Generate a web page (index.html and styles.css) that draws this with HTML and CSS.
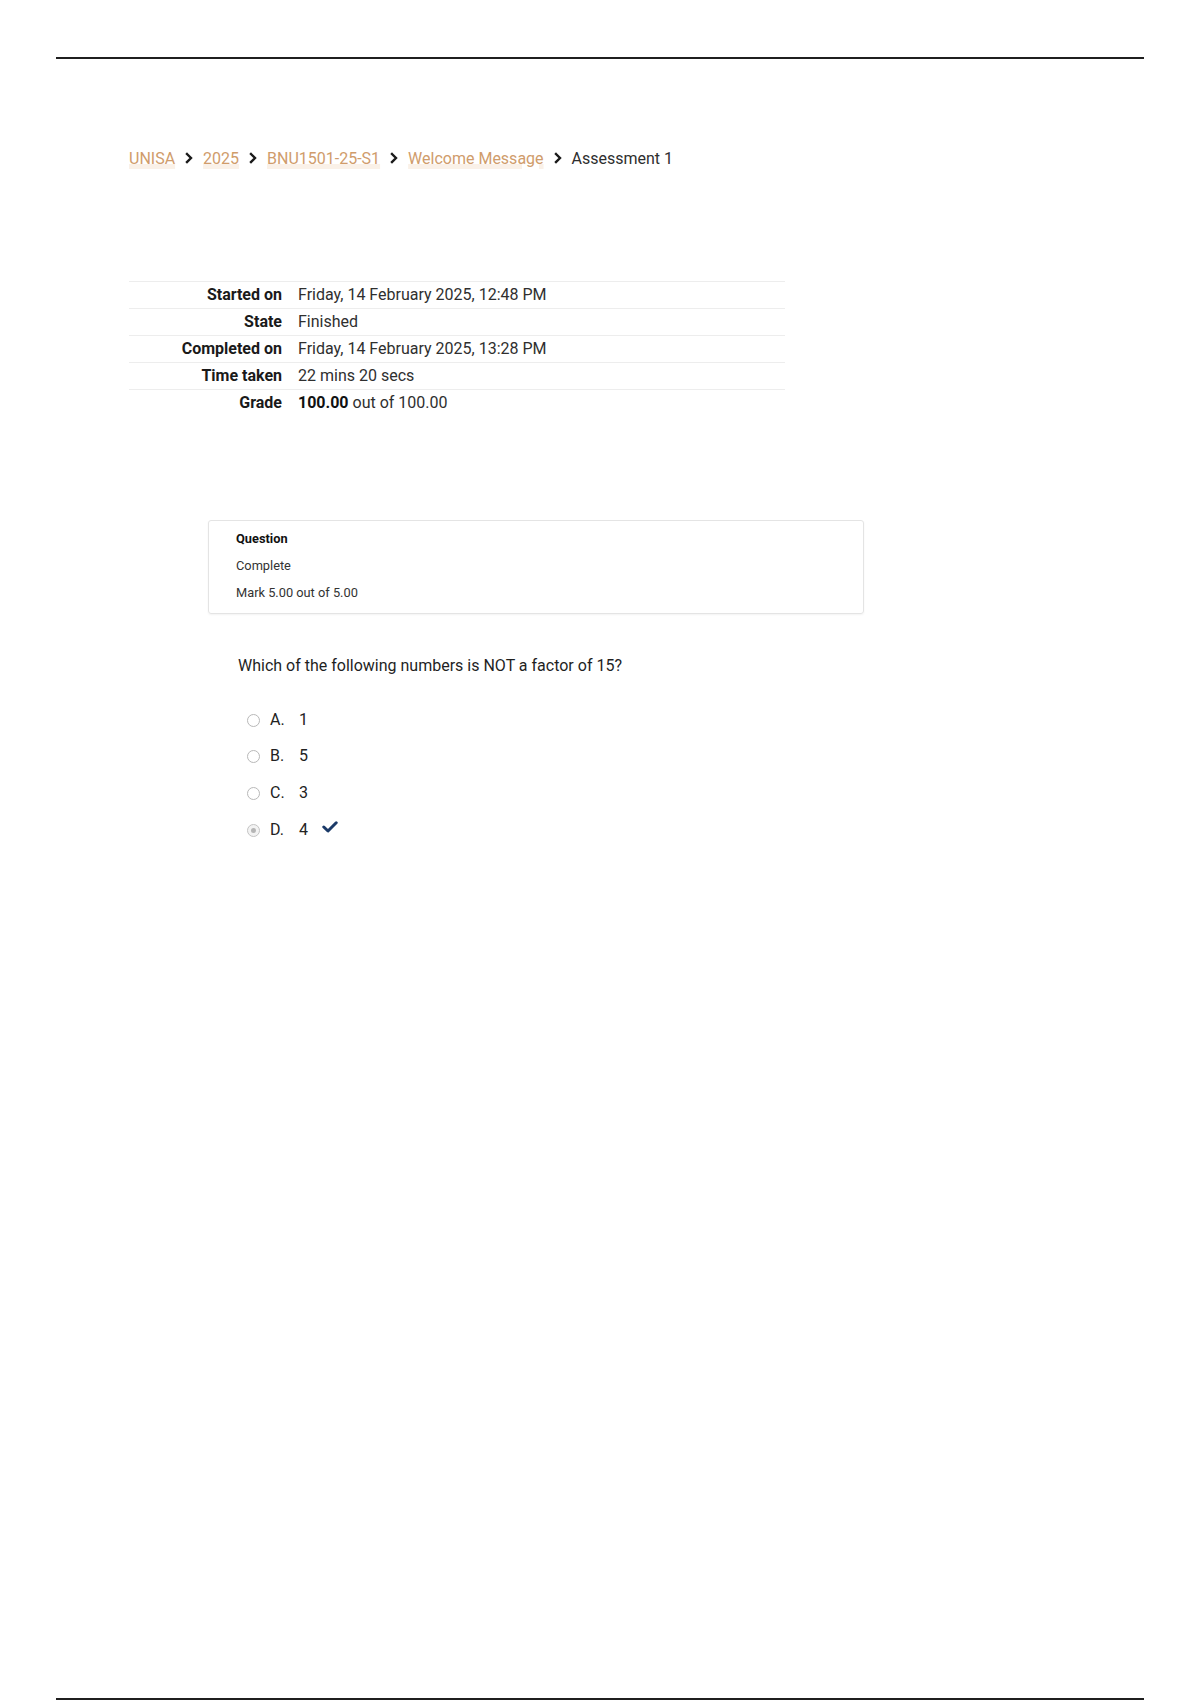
FILE: index.html
```html
<!DOCTYPE html>
<html lang="en">
<head>
<meta charset="utf-8">
<title>Assessment 1</title>
<link rel="stylesheet" href="styles.css">
</head>
<body>
<div class="page">
  <hr class="rule rule-top">
  <nav class="breadcrumb">
    <a href="#">UNISA</a>
    <svg class="chev" viewBox="0 0 8 12" width="8" height="12"><path d="M2 2 L6 6 L2 10" /></svg>
    <a href="#">2025</a>
    <svg class="chev" viewBox="0 0 8 12" width="8" height="12"><path d="M2 2 L6 6 L2 10" /></svg>
    <a href="#">BNU1501-25-S1</a>
    <svg class="chev" viewBox="0 0 8 12" width="8" height="12"><path d="M2 2 L6 6 L2 10" /></svg>
    <a href="#">Welcome Message</a>
    <svg class="chev" viewBox="0 0 8 12" width="8" height="12"><path d="M2 2 L6 6 L2 10" /></svg>
    <span class="current">Assessment 1</span>
  </nav>

  <table class="summary">
    <tbody>
      <tr><th>Started on</th><td>Friday, 14 February 2025, 12:48 PM</td></tr>
      <tr><th>State</th><td>Finished</td></tr>
      <tr><th>Completed on</th><td>Friday, 14 February 2025, 13:28 PM</td></tr>
      <tr><th>Time taken</th><td>22 mins 20 secs</td></tr>
      <tr><th>Grade</th><td><b>100.00</b> out of 100.00</td></tr>
    </tbody>
  </table>

  <section class="question">
    <div class="info">
      <div class="qno">Question</div>
      <div class="state">Complete</div>
      <div class="grade">Mark 5.00 out of 5.00</div>
    </div>
    <div class="content">
      <p class="qtext">Which of the following numbers is NOT a factor of 15?</p>
      <ul class="answers">
        <li><span class="radio"></span><span class="letter">A.</span><span class="val">1</span></li>
        <li><span class="radio"></span><span class="letter">B.</span><span class="val">5</span></li>
        <li><span class="radio"></span><span class="letter">C.</span><span class="val">3</span></li>
        <li><span class="radio checked"></span><span class="letter">D.</span><span class="val">4</span>
          <svg class="tick" viewBox="0 0 16 12" width="16" height="12"><path d="M1.8 6 L6 10 L14.2 1.8" /></svg>
        </li>
      </ul>
    </div>
  </section>

  <div class="spacer"></div>
  <hr class="rule rule-bottom">
</div>
</body>
</html>
```

FILE: styles.css
```css
html, body {
  margin: 0;
  padding: 0;
  background: #ffffff;
}

body {
  font-family: Roboto, "Liberation Sans", Arial, sans-serif;
  color: #1d2125;
  font-size: 16px;
}

.page {
  height: 1700px;
  display: flex;
  flex-direction: column;
  padding: 0 56px;
  box-sizing: border-box;
}

.rule {
  border: 0;
  height: 2px;
  background: #1f1f1f;
  margin: 0;
}

.rule-top {
  margin-top: 57px;
}

.rule-bottom {
  margin-bottom: 0;
}

.spacer {
  flex: 1;
}

.breadcrumb {
  margin-top: 89px;
  padding-left: 73px;
  display: flex;
  align-items: center;
  gap: 10px;
  line-height: 22px;
  font-size: 16px;
}

.breadcrumb a {
  color: #d09c6b;
  text-decoration: underline;
  text-decoration-color: rgba(230, 180, 130, 0.18);
  text-decoration-thickness: 5px;
  text-underline-offset: 0px;
}

.breadcrumb .current {
  color: #2e2e2e;
}

.chev {
  fill: none;
  stroke: #1a1a1a;
  stroke-width: 2.4;
  stroke-linecap: square;
  margin-top: -2px;
}

.summary {
  margin-top: 111px;
  margin-left: 73px;
  width: 656px;
  border-collapse: collapse;
  font-size: 16px;
}

.summary tr {
  border-top: 1px solid #ededed;
}

.summary th,
.summary td {
  height: 26px;
  padding: 0;
  vertical-align: middle;
  line-height: 18px;
}

.summary th {
  width: 153px;
  text-align: right;
  font-weight: 700;
  color: #1a1a1a;
  padding-right: 16px;
}

.summary td {
  color: #2f2f2f;
}

.summary td b {
  color: #111;
}

.question {
  margin-top: 104px;
  margin-left: 152px;
  width: 656px;
}

.info {
  border: 1px solid #e4e4e4;
  border-radius: 3px;
  box-shadow: 0 1px 2px rgba(0, 0, 0, 0.05);
  height: 94px;
  box-sizing: border-box;
  padding: 9px 27px 0;
  font-size: 12.8px;
  color: #333;
}

.info > div {
  line-height: 18px;
  margin-bottom: 9px;
}

.info .qno {
  font-weight: 700;
  color: #111;
}

.content {
  padding-left: 30px;
}

.qtext {
  margin: 42px 0 0;
  line-height: 20px;
  font-size: 16px;
  color: #1f1f1f;
}

.answers {
  list-style: none;
  margin: 33px 0 0;
  padding: 0 0 0 9px;
  display: flex;
  flex-direction: column;
  gap: 16.7px;
}

.answers li {
  display: flex;
  align-items: center;
  height: 20px;
  font-size: 16px;
  color: #222;
}

.radio {
  width: 13px;
  height: 13px;
  border: 1px solid #b8b8b8;
  border-radius: 50%;
  box-sizing: border-box;
  margin-right: 10px;
  margin-top: 2px;
  display: inline-flex;
  align-items: center;
  justify-content: center;
  background: #fff;
}

.radio.checked {
  border-color: #c4c4c4;
  background: #f3f3f3;
}

.radio.checked::after {
  content: "";
  width: 5px;
  height: 5px;
  border-radius: 50%;
  background: #b5b5b5;
}

.letter {
  width: 29px;
}

.val {
  width: 23px;
}

.tick {
  fill: none;
  stroke: #1b3a68;
  stroke-width: 3;
  stroke-linecap: round;
  stroke-linejoin: round;
  margin-top: -4px;
}
```
